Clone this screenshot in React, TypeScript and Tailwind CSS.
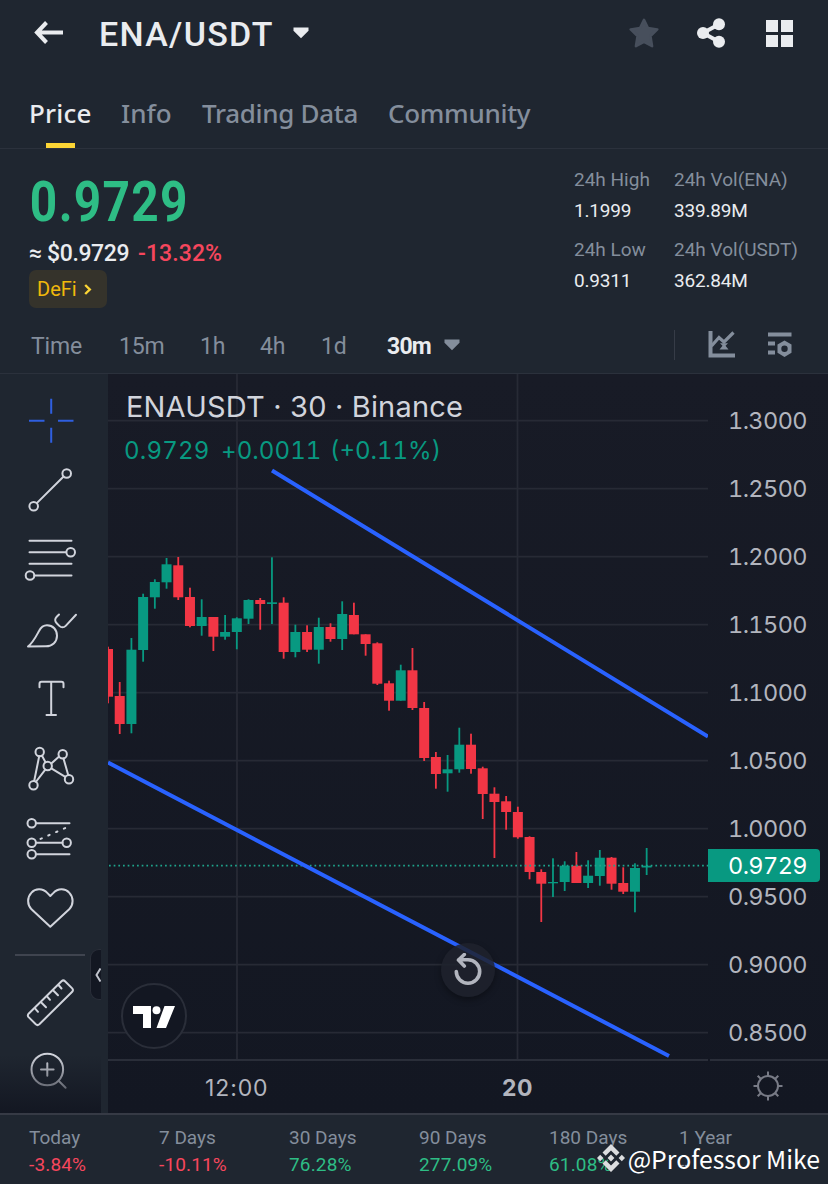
import type { ReactNode } from "react";

const sans = "font-['Noto_Sans',sans-serif]";
const din = "font-['Roboto',sans-serif]";
const inter = "font-['Inter',sans-serif]";

const tabs = [
  { label: "Price", style: "mr-[30px] w-[62px] tracking-[0.2px] text-[#eaecef]" },
  { label: "Info", style: "w-[81px]" },
  { label: "Trading Data", style: "w-[186px] tracking-[-0.3px]" },
  { label: "Community", style: "tracking-[-0.3px]" },
];

const stats = [
  { label: "24h High", value: "1.1999" },
  { label: "24h Vol(ENA)", value: "339.89M" },
  { label: "24h Low", value: "0.9311" },
  { label: "24h Vol(USDT)", value: "362.84M" },
];

const intervals = [
  { label: "Time", width: "w-[88px]" },
  { label: "15m", width: "w-[81px]" },
  { label: "1h", width: "w-[60px]" },
  { label: "4h", width: "w-[61px]" },
  { label: "1d", width: "w-[66px]" },
];

const prices = ["1.3000", "1.2500", "1.2000", "1.1500", "1.1000", "1.0500", "1.0000", "0.9500", "0.9000", "0.8500"];

const periods = [
  { label: "Today", value: "-3.84%", color: "text-[#f6465d]" },
  { label: "7 Days", value: "-10.11%", color: "text-[#f6465d]" },
  { label: "30 Days", value: "76.28%", color: "text-[#2ebd85]" },
  { label: "90 Days", value: "277.09%", color: "text-[#2ebd85]" },
  { label: "180 Days", value: "61.08%", color: "text-[#2ebd85]" },
  { label: "1 Year", value: "--", color: "text-[#848e9c]" },
];

// [up, bodyTop, bodyBottom, wickTop, wickBottom]
const candles: [number, number, number, number, number][] = [
  [0, 649, 696.7, 646.7, 703.3],
  [0, 696, 724, 682, 734],
  [1, 649.7, 724, 638, 733.3],
  [1, 597, 650, 593.7, 661.7],
  [1, 582, 597.3, 579.3, 608.7],
  [1, 564.3, 582.3, 558, 588.7],
  [0, 565.3, 597.3, 557, 600],
  [0, 597, 626, 587.7, 627.3],
  [1, 617, 626, 599.3, 635.7],
  [0, 617, 636.7, 617, 651],
  [1, 632, 636.7, 615, 639.7],
  [1, 618.3, 632, 617.3, 649.3],
  [1, 600, 618.7, 599.3, 624],
  [0, 600, 604, 598, 629.7],
  [1, 602.3, 604, 557.3, 624],
  [0, 602.7, 652, 597.3, 658.7],
  [1, 632, 652, 624.7, 657.3],
  [0, 632, 649.7, 625.3, 652],
  [1, 627, 649.7, 617.7, 663.7],
  [0, 627, 639, 623.3, 641.7],
  [1, 614, 639, 601.3, 650],
  [0, 615, 634.3, 602.7, 634.3],
  [0, 634.3, 644, 634.3, 655.7],
  [0, 643.3, 683.7, 642.3, 685],
  [0, 683.3, 700.7, 680.7, 710.7],
  [1, 670.3, 700.7, 664.7, 700.7],
  [0, 670.3, 708, 648, 710],
  [0, 708, 758, 702, 761],
  [0, 757, 774, 752, 788.7],
  [1, 769.3, 773.3, 755, 791.7],
  [1, 744.7, 769.3, 727.7, 772.7],
  [0, 744.7, 769, 733.7, 773.7],
  [0, 768.3, 794, 766.7, 819],
  [0, 793.7, 802, 787.3, 858],
  [0, 801.3, 812, 796, 829.7],
  [0, 812, 837.3, 806.7, 838.7],
  [0, 837, 872, 836.3, 879.3],
  [0, 872, 883.7, 869.3, 922],
  [1, 882, 883.3, 858.3, 897],
  [1, 865.7, 882, 861.3, 891],
  [0, 865.7, 883, 852, 883],
  [1, 875.7, 883, 860.3, 888],
  [1, 857.7, 876, 850, 885.7],
  [0, 857.7, 883.7, 857, 889.7],
  [0, 883, 891.7, 867.3, 894],
  [1, 868, 891.7, 863.3, 912.3],
  [1, 865.7, 867.5, 848, 875],
];

function Tool({ children, color = "#d1d4dc" }: { children: ReactNode; color?: string }) {
  return (
    <svg
      viewBox="0 -34.75 108 69.5"
      className="block h-[69.5px] w-[108px]"
      fill="none"
      stroke={color}
      strokeWidth="2"
      strokeLinecap="round"
      strokeLinejoin="round"
    >
      {children}
    </svg>
  );
}

function Header() {
  return (
    <header className="h-[149px] border-b border-[#2b313c]">
      <div className="flex h-[66px] items-center pl-[34px] pr-[35px] text-[#eaecef]">
        <svg className="h-6 w-[30px]" viewBox="0 0 30 24" fill="none" stroke="currentColor" strokeWidth="4">
          <path d="M29 11.5H3M12.5 1.5l-9.5 10 9.5 10" />
        </svg>
        <h1 className={`ml-[35px] w-[174px] whitespace-nowrap pt-px text-[34px] font-medium leading-none tracking-[1.3px] ${din}`}>ENA/USDT</h1>
        <svg className="ml-[20px] h-3 w-4" viewBox="0 0 16 12" fill="currentColor">
          <path d="M.5.5h15v3.2L8 11.3.5 3.7z" />
        </svg>
        {/* Favorite / share / layout */}
        <div className="ml-auto flex items-center">
          <svg className="h-[30px] w-[30px] text-[#474f5c]" viewBox="0 0 30 30" fill="currentColor" stroke="currentColor" strokeWidth="2.5" strokeLinejoin="round">
            <path d="M15 1.8l4 8.2 9.3 1.4-6.8 6.8 1.6 10L15 23.9l-8.1 4.3 1.6-10-6.8-6.8L11 10z" />
          </svg>
          <svg className="ml-[38px] h-[30px] w-[28px]" viewBox="0 0 28 30" fill="currentColor">
            <path d="M22 6.2L6 15l16 8.8" fill="none" stroke="currentColor" strokeWidth="4" />
            <circle cx="22" cy="6.2" r="6" />
            <circle cx="6" cy="15" r="6" />
            <circle cx="22" cy="23.8" r="6" />
          </svg>
          <div className="ml-[41px] grid grid-cols-2 gap-[3px]">
            {[0, 1, 2, 3].map((i) => (
              <div key={i} className="h-3 w-3 bg-[#eaecef]" />
            ))}
          </div>
        </div>
      </div>
      <nav className={`flex h-[82px] pl-[29px] text-[26px] font-medium text-[#848e9c] ${sans}`}>
        {tabs.map((tab, i) => (
          <div key={tab.label} className={tab.style}>
            <span className="block h-[77px] whitespace-nowrap leading-[94px]">{tab.label}</span>
            {i === 0 && <span className="mx-auto block h-[5px] w-[29px] bg-[#fcd535]" />}
          </div>
        ))}
      </nav>
    </header>
  );
}

function PriceSummary() {
  return (
    <section className={`flex h-[167px] justify-between ${din}`}>
      <div className="pl-[29px] pt-[25px]">
        <div className="h-[56px] origin-left scale-x-[0.87] pl-[1px] text-[55px] font-bold leading-[57px] tracking-[1.5px] text-[#2ebd85]">0.9729</div>
        <div className="mt-[11px] flex h-[26px] text-[23px] font-medium leading-[26px]">
          <span className="w-[109px] whitespace-nowrap tracking-[-0.4px] text-[#eaecef]">≈ $0.9729</span>
          <span className="tracking-[0.1px] text-[#f6465d]">-13.32%</span>
        </div>
        <div className="mt-[3px] flex h-[38px] w-[78px] items-center rounded-[7px] bg-[#35332b] pl-[8px] text-[20px] text-[#f0b90b]">
          DeFi
          <svg className="ml-[7px] h-[11px] w-2" viewBox="0 0 8 11" fill="none" stroke="#fcd535" strokeWidth="2.4">
            <path d="M1.2 1l4.6 4.5L1.2 10" />
          </svg>
        </div>
      </div>
      <dl className="grid w-[254px] grid-cols-[100px_154px] content-start pt-[15px]">
        {stats.map((s) => (
          <div key={s.label} className="h-[69.6px] whitespace-nowrap text-[19px] leading-[31px]">
            <dt className="text-[#848e9c]">{s.label}</dt>
            <dd className="tracking-[-0.2px] text-[#eaecef]">{s.value}</dd>
          </div>
        ))}
      </dl>
    </section>
  );
}

function IntervalBar() {
  return (
    <div className={`flex h-[58px] items-center border-b border-[#2b313c] pl-[31px] pr-[36px] text-[23px] text-[#848e9c] ${din}`}>
      {intervals.map((it) => (
        <span key={it.label} className={`${it.width} pt-[5px] tracking-[-0.2px]`}>{it.label}</span>
      ))}
      <span className="w-[45px] pt-[5px] font-bold tracking-[-0.8px] text-[#eaecef]">30m</span>
      <svg className="ml-[12px] h-3 w-4" viewBox="0 0 16 12" fill="currentColor">
        <path d="M.5.5h15v3.2L8 11.3.5 3.7z" />
      </svg>
      <div className="ml-auto h-[30px] w-px bg-[#363c47]" />
      <svg className="ml-[33px] h-[27px] w-7" viewBox="0 0 28 27" fill="none" stroke="currentColor" strokeWidth="4">
        <path d="M2.5 0v24.5H27" />
        <path d="M3.5 15L11 6.5l5 4.500L25.500 1.500" strokeWidth="3.200" />
        <path d="M11.500 18.500h9l-3-3.700 2.500-2.600h-8l2.500 2.600z" fill="currentColor" stroke="none" />
      </svg>
      <svg className="ml-[32px] h-[26px] w-6" viewBox="0 0 24 26" fill="currentColor">
        <path d="M0 .5h23.500v4H0zM0 9.500h7v4H0zM0 18.500h7v4H0z" />
        <path fillRule="evenodd" d="M16.500 8.500l7 4.100v8.200l-7 4.100-7-4.100v-8.200zm0 5a3.200 3.200 0 1 0 0 6.400 3.200 3.200 0 0 0 0-6.400z" />
      </svg>
    </div>
  );
}

function DrawingTools() {
  return (
    <aside className="relative h-[739px] w-[108px] pt-[12.25px]">
      {/* Crosshair */}
      <Tool color="#2f5fe0">
        <path d="M51.2-22v15M51.2 7v15M29 0h15.5M58 0h15.5" strokeLinecap="butt" />
      </Tool>
      {/* Trend line */}
      <Tool>
        <circle cx="66.7" cy="-17.3" r="4.3" />
        <circle cx="33.7" cy="15.5" r="4.3" />
        <path d="M36.8 12.4l26.8-26.6" />
      </Tool>
      {/* Fib retracement */}
      <Tool>
        <path d="M29.5-19h42M29.5-7.5h36.5M29.5 4h42M34.5 15.7h37" />
        <circle cx="70.7" cy="-7.5" r="4.3" />
        <circle cx="30" cy="15.7" r="4.3" />
      </Tool>
      {/* Brush */}
      <Tool>
        <path d="M28 16.8c5-4 8-10 11-15.5 2-4 5-5.8 8-5.8 6 0 10 4.5 10 10.5 0 6.500-5 10.500-11 10.500z" />
        <path d="M59-15.300l-2.300 2.300c-2 2-2 4.500 0 6.500l2.600 2.600c2 2 4.500 2 6.400 0L76-15" />
      </Tool>
      {/* Text */}
      <Tool>
        <path d="M39.5-11.5V-15c0-1.5.5-2 2-2h20c1.5 0 2 .5 2 2v3.5M51.2-17v33M46.5 16.3h9.5" />
      </Tool>
      {/* XABCD pattern */}
      <Tool>
        <circle cx="39.7" cy="-16.8" r="4.2" />
        <circle cx="62.7" cy="-14.5" r="4.2" />
        <circle cx="47.7" cy="-2.8" r="4.2" />
        <circle cx="33.5" cy="16.5" r="4.2" />
        <circle cx="69" cy="10.5" r="4.2" />
        <path d="M39.2-12.6l-5 24.9M42-13l3.5 6.4M51.3-5.2l7.8-7M45.3.8l-9.3 12.2M51.3-.3l14 8.4M63.5-10.3l4.7 16.5" />
      </Tool>
      {/* Forecast */}
      <Tool>
        <circle cx="31.7" cy="-14.5" r="4.2" />
        <circle cx="31.7" cy="5" r="4.2" />
        <circle cx="66.7" cy="5" r="4.2" />
        <circle cx="31.7" cy="16.5" r="4.2" />
        <path d="M36-14.5h33.5M36 5h26.5M36 16.5h33.5" />
        <path d="M40.5 1.2L67-10.5" strokeDasharray="1.5 7" />
      </Tool>
      {/* Favorites */}
      <Tool>
        <path d="M50.3-11.8l-2.8-2.8c-4.800-5-12-5-16-.5-4.500 4.700-4.500 12 0 16.700L50.300 19 69.200 1.600c4.500-4.700 4.500-12 0-16.700-4-4.500-11.300-4.500-16 .5z" />
      </Tool>
      <div className="ml-[15px] mt-[12px] h-[2px] w-[70px] bg-[#3f444f]" />
      <svg viewBox="0 956 108 156" className="block h-[156px] w-[108px]" fill="none" stroke="#d1d4dc" strokeWidth="2" strokeLinecap="round" strokeLinejoin="round">
        {/* Ruler */}
        <path d="M61.5 981.2q1.8-1.6 3.5 0l7.2 7.2q1.5 1.7 0 3.4L39.3 1024.3q-1.8 1.6-3.5 0l-7.2-7.2q-1.5-1.7 0-3.4z" />
        <path d="M35 1008.3l3 3.5M41 1002.3l5 5M47 996.3l3 3.5M53 990.3l5 5M58.5 985l3 3.5" />
        {/* Zoom in */}
        <circle cx="47.3" cy="1069.5" r="15.8" />
        <path d="M58.8 1081l6.800 6.800M41 1069.500h12.600M47.300 1063.200v12.600" />
      </svg>
      <div className="absolute bottom-0 left-0 h-[58px] w-[101px] bg-gradient-to-b from-[#131722]/0 to-[#131722]" />
      <div className="absolute left-[90px] top-[575px] flex h-[51px] w-[11px] items-center justify-end rounded-l-[9px] border border-r-0 border-[#2a2e39] bg-[#131722]">
        <svg className="h-[14px] w-[6px]" viewBox="0 0 6 14" fill="none" stroke="#c1c4cd" strokeWidth="2">
          <path d="M5.5.5L1.5 7l4 6.5" />
        </svg>
      </div>
    </aside>
  );
}

function CandleChart() {
  return (
    <svg viewBox="108 374 600 685" className="block h-[685px] w-[600px]">
      <g stroke="#272a35" strokeWidth="1.8">
        {prices.map((p, i) => (
          <line key={p} x1="108" x2="708" y1={420.7 + i * 68} y2={420.7 + i * 68} />
        ))}
        <path d="M237 374v685M517.5 374v685" />
      </g>
      {candles.map(([up, top, bottom, high, low], i) => {
        const x = 108 + i * 11.71;
        return (
          <g key={i} fill={up ? "#089981" : "#f23645"}>
            <rect x={x - 0.9} y={high} width="1.8" height={low - high} />
            <rect x={x - 5} y={top} width="10" height={bottom - top} />
          </g>
        );
      })}
      <line x1="109" x2="708" y1="865.7" y2="865.7" stroke="#1fa48c" strokeWidth="1.8" strokeDasharray="1.7 2.97" />
      <path d="M272 470.5L708 736.5M108 762.5L669 1056" stroke="#2962ff" strokeWidth="4" fill="none" />
    </svg>
  );
}

function Chart() {
  return (
    <section className={`flex h-[739px] w-[720px] flex-col bg-gradient-to-b from-[#181b26] to-[#131722] ${inter}`}>
      <div className="flex h-[685px]">
        <div className="relative w-[600px]">
          <CandleChart />
          <div className="absolute left-[18px] top-[16px] whitespace-nowrap text-[29px] leading-[34px] tracking-[0.17px] text-[#d1d4dc]">
            ENAUSDT · 30 · Binance
          </div>
          <div className="absolute left-[16px] top-[62px] flex whitespace-nowrap text-[24px] leading-[30px] tabular-nums text-[#089981]">
            <span className="w-[97px] tracking-[0.2px]">0.9729</span>
            <span className="w-[109px] tracking-[0.1px]">+0.0011</span>
            <span>(+0.11%)</span>
          </div>
          {/* Reset view */}
          <div className="absolute left-[333px] top-[569px] flex h-[54px] w-[54px] items-center justify-center rounded-full bg-[#1e222d]/85 shadow-[0_3px_6px_rgba(0,0,0,0.35)]">
            <svg className="h-[34px] w-[30px]" viewBox="0 0 30 34" fill="none" stroke="#b2b5be" strokeWidth="3.6" strokeLinecap="round" strokeLinejoin="round">
              <path d="M3.3 18.5a11.7 11.7 0 1 0 11.7-11.7H5.5M11.3 1.5L5.5 7l5.8 6" />
            </svg>
          </div>
          {/* TradingView mark */}
          <div className="absolute left-[13px] top-[609px] flex h-[66px] w-[66px] items-center justify-center rounded-full border-2 border-[#2a2e39] bg-[#131722]">
            <svg className="mt-[2px] h-[22px] w-[42px]" viewBox="0 0 42 22" fill="#fff">
              <path d="M0 0h18v22h-8V8H0zM31.5 0H42l-9 22H23.5z" />
              <circle cx="23.5" cy="4.2" r="4" />
            </svg>
          </div>
        </div>
        {/* Price axis */}
        <div className="relative w-[120px] pt-[12.5px] text-[23.5px] tabular-nums tracking-[-0.6px] text-[#b2b5be]">
          {prices.map((p) => (
            <div key={p} className="h-[68.05px] pl-[20px] leading-[68px]">{p}</div>
          ))}
          <div className="absolute left-0 top-[475px] h-[33px] w-[112px] rounded-r-[4px] bg-[#089981] pl-[20px] leading-[34px] text-white">0.9729</div>
        </div>
      </div>
      {/* Time axis */}
      <div className="flex h-[54px] text-[23px] leading-[54px] text-[#b2b5be]">
        <div className="flex w-[600px] border-t-2 border-[#2a2e39]">
          <span className="ml-[97px] w-[297px] tracking-[0.9px]">12:00</span>
          <span className="font-bold tracking-[0.5px]">20</span>
        </div>
        <div className="ml-[2px] flex flex-1 items-center justify-center border-t-2 border-[#2a2e39] pb-[2px] pr-[3px]">
          <svg className="h-[30px] w-[30px]" viewBox="-15 -15 30 30" fill="none" stroke="#787b86" strokeWidth="2">
            <circle r="10" />
            <path d="M0-10v-4.5M0 10v4.5M-10 0h-4.5M10 0h4.5M-7-7l-3.3-3.3M7-7l3.3-3.3M-7 7l-3.3 3.3M7 7l3.3 3.3" />
          </svg>
        </div>
      </div>
    </section>
  );
}

function Performance() {
  return (
    <footer className={`relative flex h-[71px] border-t-2 border-[#363a45] pl-[29px] pt-[9px] ${din}`}>
      {periods.map((p) => (
        <div key={p.label} className="w-[130px] shrink-0 whitespace-nowrap text-[19px] leading-[27px]">
          <div className="text-[#848e9c]">{p.label}</div>
          <div className={`tracking-[0.15px] ${p.color}`}>{p.value}</div>
        </div>
      ))}
      {/* Author watermark */}
      <div className="absolute right-[8px] top-[26px] flex items-center text-white">
        <svg className="mr-[3px] h-7 w-7" viewBox="0 0 28 28" fill="#dcdddf">
          <path d="M14 0l8.5 8.5-3.2 3.2L14 6.4l-5.3 5.3-3.2-3.2zM14 28l-8.5-8.5 3.2-3.2 5.3 5.3 5.3-5.3 3.2 3.2zM3.2 10.8L6.4 14l-3.2 3.2L0 14zM24.8 10.8L28 14l-3.2 3.2-3.2-3.2zM14 10.6l3.4 3.4-3.4 3.4-3.4-3.4z" />
        </svg>
        <span className="whitespace-nowrap font-['Noto_Sans_CJK_SC',sans-serif] text-[24.8px] leading-[34px]">@Professor Mike</span>
      </div>
    </footer>
  );
}

export default function App() {
  return (
    <main className="h-[1184px] w-[828px] overflow-hidden bg-[#1f2630]">
      <Header />
      <PriceSummary />
      <IntervalBar />
      <div className="flex">
        <DrawingTools />
        <Chart />
      </div>
      <Performance />
    </main>
  );
}
